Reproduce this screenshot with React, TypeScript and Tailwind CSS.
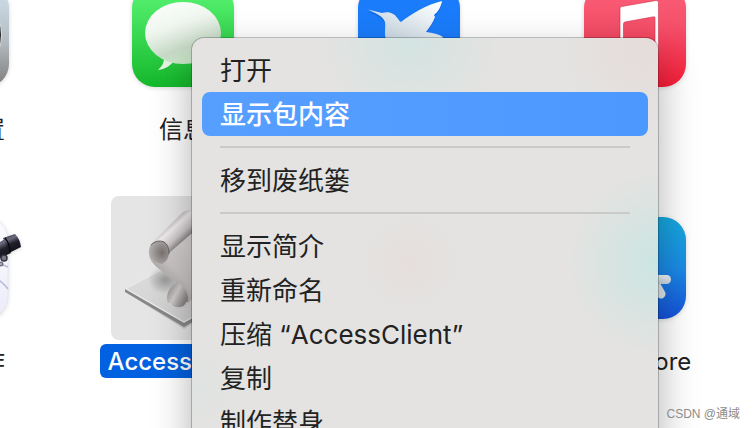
import type { ReactNode } from 'react';

function SettingsIcon() {
  return (
    <svg viewBox="0 0 102 102" className="size-[102px] overflow-visible drop-shadow-sm" aria-hidden="true">
      <defs>
        <linearGradient id="settings-bg" x1="0" y1="0" x2="0" y2="1">
          <stop offset="0" stopColor="#cfe2ee" />
          <stop offset="0.55" stopColor="#b4bcc2" />
          <stop offset="1" stopColor="#7e7c7b" />
        </linearGradient>
      </defs>
      <rect width="103" height="102" rx="23" fill="url(#settings-bg)" />
      <circle cx="51" cy="50" r="45" fill="#d5dadd" />
      <circle cx="51" cy="50" r="44" fill="#232426" />
      <circle cx="51" cy="50" r="30" fill="none" stroke="#8d9194" strokeWidth="6" strokeDasharray="4 3" />
    </svg>
  );
}

function MessagesIcon() {
  return (
    <svg viewBox="0 0 102 102" className="size-[102px] overflow-visible drop-shadow-sm" aria-hidden="true">
      <defs>
        <linearGradient id="messages-bg" x1="0" y1="0" x2="0" y2="1">
          <stop offset="0" stopColor="#5bf675" />
          <stop offset="1" stopColor="#14b82b" />
        </linearGradient>
        <linearGradient id="messages-bubble" x1="0.2" y1="0" x2="0.6" y2="1">
          <stop offset="0" stopColor="#fdfffd" />
          <stop offset="0.4" stopColor="#eef5ee" />
          <stop offset="0.75" stopColor="#c9dcc8" />
          <stop offset="1" stopColor="#cdeecb" />
        </linearGradient>
      </defs>
      <rect width="102" height="102" rx="23" fill="url(#messages-bg)" />
      <path d="M32 73C32 79 29 82 26 85C33 84 38 81 41 77Z" fill="#e6f6e5" />
      <ellipse cx="51" cy="48" rx="38" ry="31" fill="url(#messages-bubble)" />
    </svg>
  );
}

function BirdIcon() {
  return (
    <svg viewBox="0 0 102 102" className="size-[102px] overflow-visible drop-shadow-sm" aria-hidden="true">
      <defs>
        <linearGradient id="bird-body" x1="1" y1="0" x2="0" y2="1">
          <stop offset="0" stopColor="#ffffff" />
          <stop offset="0.6" stopColor="#d3dfe8" />
          <stop offset="1" stopColor="#b6cbdc" />
        </linearGradient>
      </defs>
      <rect width="102" height="102" rx="23" fill="#1a7cfb" />
      <path
        d="M10 24.500L24 28C28 27 32 27 35 29C39 31 40 35 43 37C53 29 68 20 84 16C83 22 80 27 76 30L77 32C75 38 71 43 68 47C75 48 80 49 85 52C77 62 68 70 55 72C38 74 27 62 27 48C27 43 28 38 26 35C23 30 17 28 10 24.500Z"
        fill="#0d57c8"
        opacity="0.45"
        transform="translate(0 2)"
      />
      <path
        d="M10 24.500L24 28C28 27 32 27 35 29C39 31 40 35 43 37C53 29 68 20 84 16C83 22 80 27 76 30L77 32C75 38 71 43 68 47C75 48 80 49 85 52C77 62 68 70 55 72C38 74 27 62 27 48C27 43 28 38 26 35C23 30 17 28 10 24.500Z"
        fill="url(#bird-body)"
      />
    </svg>
  );
}

function MusicIcon() {
  return (
    <svg viewBox="0 0 102 102" className="size-[102px] overflow-visible drop-shadow-sm" aria-hidden="true">
      <defs>
        <linearGradient id="music-bg" x1="0" y1="0" x2="0" y2="1">
          <stop offset="0" stopColor="#fc5f77" />
          <stop offset="0.4" stopColor="#f4506a" />
          <stop offset="1" stopColor="#f81d38" />
        </linearGradient>
      </defs>
      <rect width="102" height="102" rx="23" fill="url(#music-bg)" />
      <path
        d="M36 23.500Q36 22 37.500 21.600L72 15.500Q74.500 15 74.500 17.500V66C74.500 72 69 75 64 74C58 73 58 65 64 63L71 61V33Q71 31.500 69.500 31.800L41 37Q39.500 37.300 39.500 39V74C39.500 80 34 83 29 82C23 81 23 73 29 71L36 69Z"
        fill="#ffffff"
        stroke="#ce3048"
        strokeWidth="0.600"
      />
    </svg>
  );
}

function TelescopeIcon() {
  return (
    <svg viewBox="0 0 102 102" className="size-[102px] overflow-visible drop-shadow-sm" aria-hidden="true">
      <defs>
        <linearGradient id="scope-bg" x1="0" y1="0" x2="0" y2="1">
          <stop offset="0" stopColor="#fdfdff" />
          <stop offset="1" stopColor="#ebebfa" />
        </linearGradient>
        <linearGradient id="scope-tube" x1="0" y1="0" x2="0.4" y2="1">
          <stop offset="0" stopColor="#20202c" />
          <stop offset="0.35" stopColor="#6c6c80" />
          <stop offset="0.6" stopColor="#20202b" />
          <stop offset="1" stopColor="#111119" />
        </linearGradient>
      </defs>
      <rect width="102" height="102" rx="23" fill="url(#scope-bg)" stroke="#e4e4f0" strokeWidth="0.700" />
      <path d="M75 42Q91 45 102 50M78 57Q93 60 102 72" fill="none" stroke="#b9b9da" strokeWidth="1.500" />
      <path d="M84 31L99 22L105 36L88 44Z" fill="url(#scope-tube)" />
      <path d="M97 21L109 17Q114 22 115 30L103 36Z" fill="url(#scope-tube)" />
      <path d="M99 21Q104 27 104 35" fill="none" stroke="#07070b" strokeWidth="1.200" />
      <circle cx="98" cy="41" r="3" fill="#777786" stroke="#33333f" strokeWidth="1.500" />
      <circle cx="95" cy="47" r="2" fill="#a6a6b5" stroke="#555564" />
    </svg>
  );
}

function ScriptIcon() {
  return (
    <svg viewBox="0 0 144 144" className="size-36" aria-hidden="true">
      <defs>
        <linearGradient id="script-plate" x1="0" y1="0" x2="1" y2="0.6">
          <stop offset="0" stopColor="#dcdddc" />
          <stop offset="1" stopColor="#c9cac9" />
        </linearGradient>
        <linearGradient id="script-roll" gradientUnits="userSpaceOnUse" x1="54" y1="28" x2="70" y2="46">
          <stop offset="0" stopColor="#aaa5a6" />
          <stop offset="0.35" stopColor="#efebec" />
          <stop offset="0.75" stopColor="#cbc6c7" />
          <stop offset="1" stopColor="#918c8d" />
        </linearGradient>
        <linearGradient id="script-sheet" gradientUnits="userSpaceOnUse" x1="48" y1="78" x2="78" y2="50">
          <stop offset="0" stopColor="#aaa6a6" />
          <stop offset="0.35" stopColor="#c8c4c4" />
          <stop offset="1" stopColor="#d6d2d2" />
        </linearGradient>
        <radialGradient id="script-hollow" cx="0.65" cy="0.5" r="0.65">
          <stop offset="0" stopColor="#77726f" />
          <stop offset="1" stopColor="#b5b0b0" />
        </radialGradient>
        <linearGradient id="script-curl" gradientUnits="userSpaceOnUse" x1="56" y1="96" x2="78" y2="108">
          <stop offset="0" stopColor="#9b9696" />
          <stop offset="0.35" stopColor="#d0cccc" />
          <stop offset="0.8" stopColor="#8b8686" />
          <stop offset="1" stopColor="#716c6c" />
        </linearGradient>
        <radialGradient id="script-shade">
          <stop offset="0" stopColor="#777777" stopOpacity="0.65" />
          <stop offset="1" stopColor="#777777" stopOpacity="0" />
        </radialGradient>
      </defs>
      <path d="M15 96L73 133L131 96L73 126Z" fill="#777777" opacity="0.25" />
      <path d="M14 93L73 127L132 93V96L73 131L14 96Z" fill="#878887" />
      <path d="M15 92.500L52 73L92 73L131 92.500L73 126Z" fill="url(#script-plate)" stroke="#f0f0f0" strokeWidth="0.800" />
      <ellipse cx="54" cy="84" rx="17" ry="14" fill="url(#script-shade)" />
      <path d="M38 54C37 64 43 69 52 76C60 83 70 88 74 95C77 100 77 105 75 108Q83 104 88 90L103 24L60 45L48 59Z" fill="url(#script-sheet)" />
      <path d="M66 86C60 90 56 96 56 102C56 108 61 112.500 67 112.500C73 112.500 77 108 77 102C77 96 72 90 66 86Z" fill="url(#script-curl)" />
      <path d="M41 47L70 18Q75 13 84 14L108 18Q104 28 96 32L80 38L58 57Q58 48 51 45.500Q45 44 41 47Z" fill="url(#script-roll)" />
      <path d="M38 55C38 48 43 45 48 45C55 45 59 51 58 58Q57 65 51 68Q45 67 42 64Q38 60 38 55Z" fill="url(#script-hollow)" />
      <path d="M40 49Q46 43 53 46Q58 49 58 58" fill="none" stroke="#676263" strokeWidth="1" />
      <path d="M58 107Q61 112 67 112Q73 112 76 106" fill="none" stroke="#e9e7e7" strokeWidth="1" />
    </svg>
  );
}

function StoreIcon() {
  return (
    <svg viewBox="0 0 102 102" className="size-[102px] overflow-visible drop-shadow-sm" aria-hidden="true">
      <defs>
        <linearGradient id="store-bg" x1="0" y1="0" x2="0" y2="1">
          <stop offset="0" stopColor="#16a9de" />
          <stop offset="0.5" stopColor="#1b8be6" />
          <stop offset="1" stopColor="#1551da" />
        </linearGradient>
        <linearGradient id="store-bar" x1="0" y1="0" x2="0" y2="1">
          <stop offset="0" stopColor="#f4f8fb" />
          <stop offset="1" stopColor="#c8d6e1" />
        </linearGradient>
      </defs>
      <rect width="102" height="102" rx="23" fill="url(#store-bg)" />
      <path d="M46 22L77 77" stroke="#e0e8ee" strokeWidth="9" strokeLinecap="round" />
      <path d="M56 22L25 77" stroke="#e0e8ee" strokeWidth="9" strokeLinecap="round" />
      <rect x="15" y="58" width="72" height="9" rx="4.500" fill="url(#store-bar)" />
    </svg>
  );
}

type DesktopItem = { label: string; icon: ReactNode; selected?: boolean };

const apps: DesktopItem[] = [
  { label: '系统设置', icon: <SettingsIcon /> },
  { label: '信息', icon: <MessagesIcon /> },
  { label: '迅雷', icon: <BirdIcon /> },
  { label: '音乐', icon: <MusicIcon /> },
  { label: '自动操作', icon: <TelescopeIcon /> },
  { label: 'AccessClient', icon: <ScriptIcon />, selected: true },
  { label: '预览', icon: null },
  { label: 'App Store', icon: <StoreIcon /> },
];

const menuGroups = [
  ['打开', '显示包内容'],
  ['移到废纸篓'],
  ['显示简介', '重新命名', '压缩 “AccessClient”', '复制', '制作替身'],
];

const highlighted = '显示包内容';

function AppTile({ label, icon, selected }: DesktopItem) {
  return (
    <li className="flex flex-col items-center gap-1">
      <div
        className={`flex size-36 items-center justify-center overflow-hidden rounded-lg ${selected ? 'bg-[#e5e5e5]' : ''}`}
      >
        {icon}
      </div>
      <span
        className={`rounded-md px-2 pt-0.5 text-[24px] leading-8 whitespace-nowrap ${selected ? 'bg-[#0261e0] font-medium text-white' : 'text-[#222222]'}`}
      >
        {label}
      </span>
    </li>
  );
}

function ContextMenu() {
  return (
    <div
      role="menu"
      className="absolute top-[38px] left-48 w-[466px] rounded-xl bg-[#e4e3e1] bg-[radial-gradient(circle_at_218px_0px,#d3e4e2_0px,transparent_90px),radial-gradient(circle_at_466px_225px,#cbe5e2_0px,transparent_92px),radial-gradient(circle_at_218px_225px,#e5dedd_0px,transparent_50px),radial-gradient(circle_at_450px_10px,#e5dcdb_0px,transparent_80px),radial-gradient(circle_at_0px_350px,#dfe3e2_0px,transparent_50px)] p-2.5 shadow-[0_0_0_1px_rgba(0,0,0,0.22),0_16px_40px_rgba(0,0,0,0.32)]"
    >
      {menuGroups.map((group, index) => (
        <div key={group[0]} role="group">
          {index > 0 && <hr className="mx-[18px] my-2.5 border-t-2 border-[#cacac8]" />}
          {group.map((item) => (
            <button
              key={item}
              type="button"
              role="menuitem"
              className={`block h-11 w-full rounded-lg px-[18px] pt-0.5 text-left text-[26px] leading-[42px] whitespace-nowrap ${item === highlighted ? 'bg-linear-to-r from-[#579fff] to-[#4b98ff] font-medium text-white' : 'text-[#222222]'}`}
            >
              {item}
            </button>
          ))}
        </div>
      ))}
    </div>
  );
}

export default function App() {
  return (
    <main className="relative h-screen overflow-hidden bg-white font-['Inter','Noto_Sans_CJK_SC',sans-serif]">
      <ul className="-mt-9 -ml-[156px] grid grid-cols-[repeat(4,226px)] gap-y-[50px]">
        {apps.map((app) => (
          <AppTile key={app.label} {...app} />
        ))}
      </ul>
      <ContextMenu />
      <p className="absolute right-3.5 bottom-1 font-['Liberation_Sans','Noto_Sans_CJK_SC',sans-serif] text-[12px] leading-5 text-[#8c8c8c]">
        CSDN @通域
      </p>
    </main>
  );
}
